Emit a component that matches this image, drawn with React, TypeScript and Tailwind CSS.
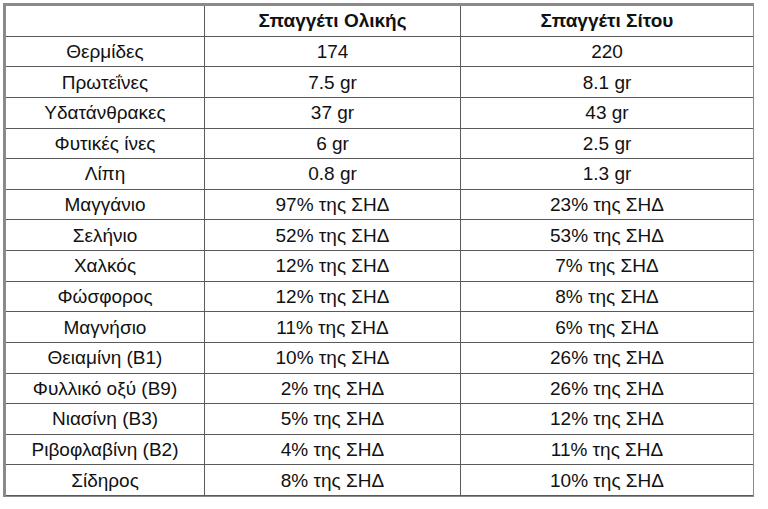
const rows: [string, string, string][] = [
  ["Θερμίδες", "174", "220"],
  ["Πρωτεΐνες", "7.5 gr", "8.1 gr"],
  ["Υδατάνθρακες", "37 gr", "43 gr"],
  ["Φυτικές ίνες", "6 gr", "2.5 gr"],
  ["Λίπη", "0.8 gr", "1.3 gr"],
  ["Μαγγάνιο", "97% της ΣΗΔ", "23% της ΣΗΔ"],
  ["Σελήνιο", "52% της ΣΗΔ", "53% της ΣΗΔ"],
  ["Χαλκός", "12% της ΣΗΔ", "7% της ΣΗΔ"],
  ["Φώσφορος", "12% της ΣΗΔ", "8% της ΣΗΔ"],
  ["Μαγνήσιο", "11% της ΣΗΔ", "6% της ΣΗΔ"],
  ["Θειαμίνη (B1)", "10% της ΣΗΔ", "26% της ΣΗΔ"],
  ["Φυλλικό οξύ (B9)", "2% της ΣΗΔ", "26% της ΣΗΔ"],
  ["Νιασίνη (B3)", "5% της ΣΗΔ", "12% της ΣΗΔ"],
  ["Ριβοφλαβίνη (B2)", "4% της ΣΗΔ", "11% της ΣΗΔ"],
  ["Σίδηρος", "8% της ΣΗΔ", "10% της ΣΗΔ"],
];

const cell =
  "flex items-center justify-center border-r border-b border-[#5a5a5a] whitespace-nowrap";

export default function App() {
  return (
    <div className="w-[768px] h-[509px] bg-white pt-[4px] pl-[4px] font-['Liberation_Sans',Arial,sans-serif] text-[19px] leading-none text-[#111]">
      <div className="grid grid-cols-[199px_256px_293px] grid-rows-[repeat(16,minmax(0,1fr))] h-[492px] w-[749px] border-l-2 border-t-2 border-[#8a8a8a] outline outline-1 outline-[#8a8a8a]">
        <div className={cell}></div>
        <div className={cell + " font-bold"}>Σπαγγέτι Ολικής</div>
        <div className={cell + " font-bold"}>Σπαγγέτι Σίτου</div>
        {rows.map((r, i) => (
          <div key={i} className="contents">
            <div className={cell}>{r[0]}</div>
            <div className={cell}>{r[1]}</div>
            <div className={cell}>{r[2]}</div>
          </div>
        ))}
      </div>
    </div>
  );
}
